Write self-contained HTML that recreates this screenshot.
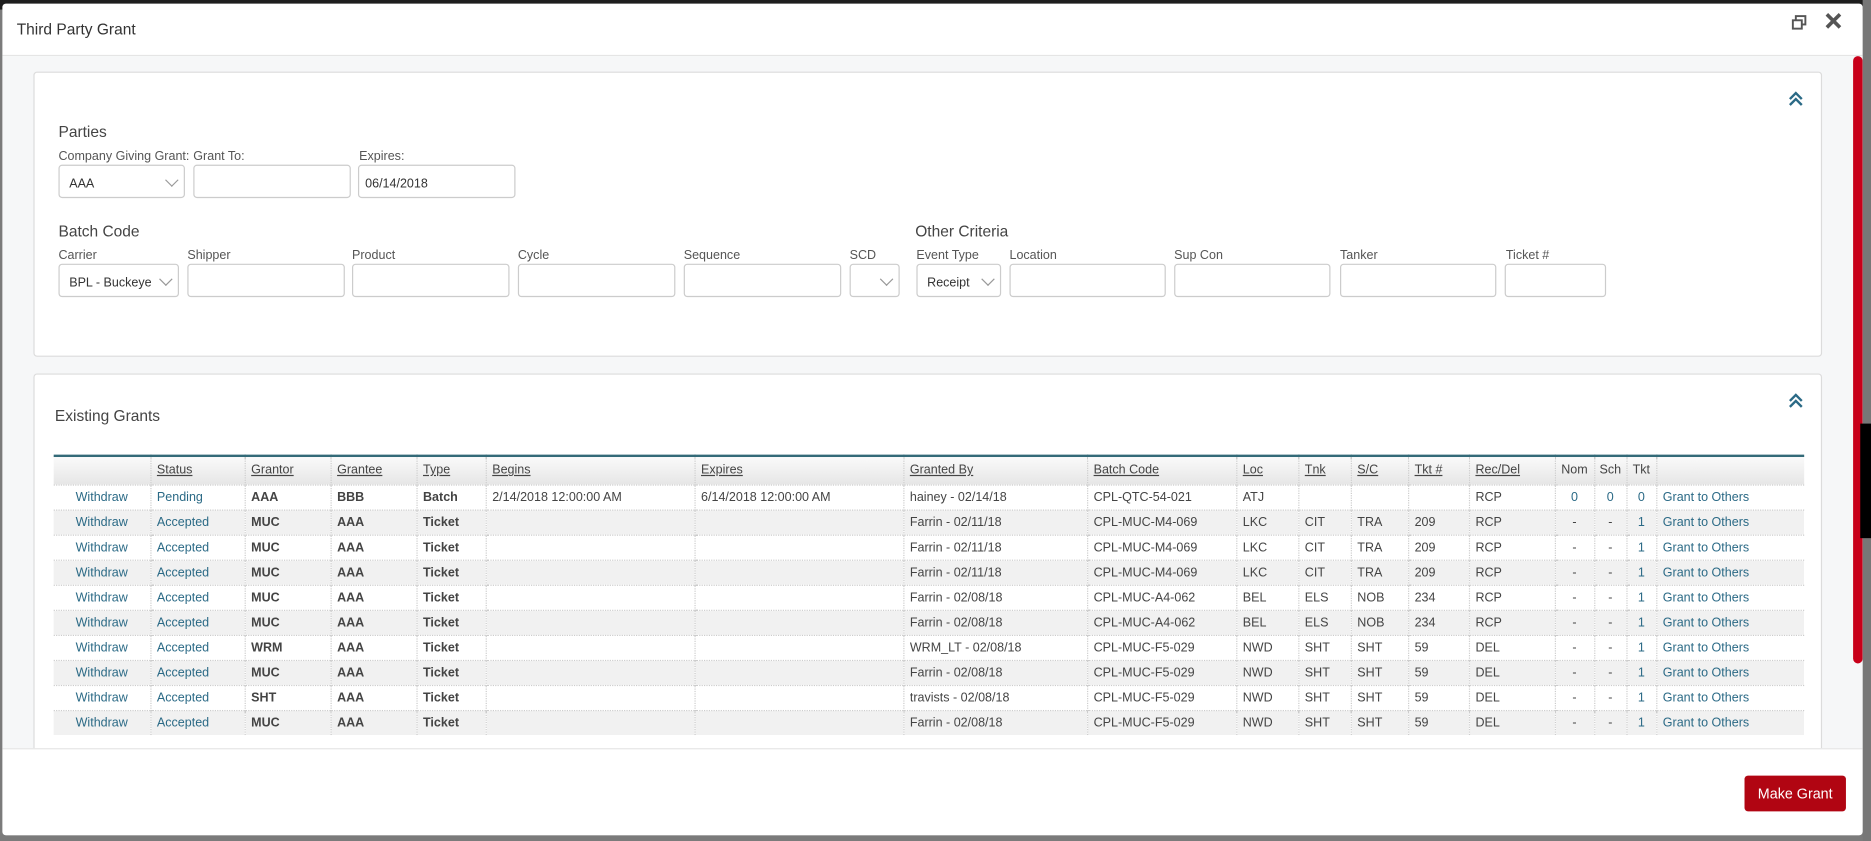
<!DOCTYPE html>
<html><head><meta charset="utf-8"><style>
*{box-sizing:border-box;margin:0;padding:0}
html,body{width:1871px;height:841px;overflow:hidden;background:#7b7b7b}
#s{position:absolute;left:0;top:0;width:1568px;height:705px;transform:scale(1.19324);transform-origin:0 0;font-family:"Liberation Sans",Arial,sans-serif;color:#333}
.abs{position:absolute}
#top{left:0;top:0;width:1568px;height:8px;background:#1e1e1e}
#rstrip{left:1561px;top:0;width:7px;height:705px;background:#777}
#rblk{left:1559px;top:355px;width:9px;height:96px;background:#000}
#modal{left:2px;top:3px;width:1559px;height:697px;background:#fff;border-radius:3px;overflow:hidden}
#hdr{left:0;top:0;width:1559px;height:44px;border-bottom:1px solid #e5e5e5}
#hdr .t{left:12px;top:14px;font-size:13px;color:#333}
#body{left:0;top:44px;width:1559px;height:580px;background:#f6f7f8}
.panel{position:absolute;background:#fff;border:1px solid #dcdcdc;border-radius:3px}
.h{position:absolute;font-size:13px;color:#444}
.lb{position:absolute;font-size:10.5px;color:#555}
.in{position:absolute;height:28px;border:1px solid #ccc;border-radius:3px;background:#fff;font-size:10.5px;color:#333;padding:9px 0 0 8px}
.sel::after{content:"";position:absolute;right:6px;top:8px;width:7px;height:7px;border-right:1px solid #999;border-bottom:1px solid #999;transform:rotate(45deg)}
.chev{position:absolute;width:14px;height:14px}
table{position:absolute;left:16px;top:67px;width:1467px;border-collapse:collapse;font-size:10.5px;table-layout:fixed;border-top:2px solid #336a78;border-radius:4px 4px 0 0}
th{height:24px;background:linear-gradient(#fafafa,#e6e6e6);text-align:left;font-weight:normal;color:#444;text-decoration:underline;padding-left:5px;border-left:1px dotted #ccc}
td{height:21px;padding-left:5px;border-left:1px dotted #ccc;border-top:1px dotted #ccc;color:#444;white-space:nowrap;overflow:hidden}
tr:nth-child(odd) td{background:#f1f1f1}
td.b{font-weight:bold;color:#444}
.a{color:#2b6a86}
.c{text-align:center;padding-left:0}
th.c{text-decoration:none}
#ftr{left:0;top:624px;width:1559px;height:73px;border-top:1px solid #e5e5e5;background:#fff}
#btn{left:1460px;top:22px;width:85px;height:30px;background:#b10512;border-radius:3px;color:#fff;font-size:12px;text-align:center;line-height:30px}
#sb{left:1551px;top:0px;width:8px;height:509px;background:#c8001a;border-radius:4px}
</style></head><body><div id="s">
<div class="abs" id="top"></div>
<div class="abs" id="rstrip"></div>
<div class="abs" id="modal">
 <div class="abs" id="hdr"><div class="abs t">Third Party Grant</div>
  <svg class="abs" style="left:1499px;top:9px" width="14" height="14" viewBox="0 0 14 14"><rect x="4" y="1.5" width="8" height="7" fill="none" stroke="#555" stroke-width="1.6"/><rect x="1.5" y="5" width="7.5" height="7" fill="#fff" stroke="#555" stroke-width="1.6"/></svg>
  <svg class="abs" style="left:1527px;top:7px" width="15" height="15" viewBox="0 0 15 15"><path d="M2 2L13 13M13 2L2 13" stroke="#555" stroke-width="3"/></svg>
 </div>
 <div class="abs" id="body">
  <div class="panel" style="left:26px;top:13px;width:1499px;height:239px">
   <svg class="chev" style="left:1469px;top:15px" viewBox="0 0 14 14"><path d="M2 7L7 2L12 7M2 12L7 7L12 12" fill="none" stroke="#2b6a86" stroke-width="2"/></svg>
   <div class="h" style="left:20px;top:42px">Parties</div>
   <div class="lb" style="left:20px;top:64px">Company Giving Grant:</div>
   <div class="lb" style="left:133px;top:64px">Grant To:</div>
   <div class="lb" style="left:272px;top:64px">Expires:</div>
   <div class="in sel" style="left:20px;top:77px;width:106px">AAA</div>
   <div class="in" style="left:133px;top:77px;width:132px"></div>
   <div class="in" style="left:271px;top:77px;width:132px;padding-left:5px">06/14/2018</div>
   <div class="h" style="left:20px;top:125px">Batch Code</div>
   <div class="h" style="left:738px;top:125px">Other Criteria</div>
   <div class="lb" style="left:20px;top:147px">Carrier</div>
   <div class="lb" style="left:128px;top:147px">Shipper</div>
   <div class="lb" style="left:266px;top:147px">Product</div>
   <div class="lb" style="left:405px;top:147px">Cycle</div>
   <div class="lb" style="left:544px;top:147px">Sequence</div>
   <div class="lb" style="left:683px;top:147px">SCD</div>
   <div class="lb" style="left:739px;top:147px">Event Type</div>
   <div class="lb" style="left:817px;top:147px">Location</div>
   <div class="lb" style="left:955px;top:147px">Sup Con</div>
   <div class="lb" style="left:1094px;top:147px">Tanker</div>
   <div class="lb" style="left:1233px;top:147px">Ticket #</div>
   <div class="in sel" style="left:20px;top:160px;width:101px">BPL - Buckeye</div>
   <div class="in" style="left:128px;top:160px;width:132px"></div>
   <div class="in" style="left:266px;top:160px;width:132px"></div>
   <div class="in" style="left:405px;top:160px;width:132px"></div>
   <div class="in" style="left:544px;top:160px;width:132px"></div>
   <div class="in sel" style="left:683px;top:160px;width:42px"></div>
   <div class="in sel" style="left:739px;top:160px;width:71px">Receipt</div>
   <div class="in" style="left:817px;top:160px;width:131px"></div>
   <div class="in" style="left:955px;top:160px;width:131px"></div>
   <div class="in" style="left:1094px;top:160px;width:131px"></div>
   <div class="in" style="left:1232px;top:160px;width:85px"></div>
  </div>
  <div class="panel" style="left:26px;top:266px;width:1499px;height:330px;overflow:hidden">
   <svg class="chev" style="left:1469px;top:15px" viewBox="0 0 14 14"><path d="M2 7L7 2L12 7M2 12L7 7L12 12" fill="none" stroke="#2b6a86" stroke-width="2"/></svg>
   <div class="h" style="left:17px;top:27px">Existing Grants</div>
   <table>
    <colgroup><col style="width:81px"><col style="width:79px"><col style="width:72px"><col style="width:72px"><col style="width:58px"><col style="width:175px"><col style="width:175px"><col style="width:154px"><col style="width:125px"><col style="width:52px"><col style="width:44px"><col style="width:48px"><col style="width:51px"><col style="width:72px"><col style="width:33px"><col style="width:27px"><col style="width:25px"><col style="width:124px"></colgroup>
    <tr><th style="border-left:none;text-decoration:none"></th><th>Status</th><th>Grantor</th><th>Grantee</th><th>Type</th><th>Begins</th><th>Expires</th><th>Granted By</th><th>Batch Code</th><th>Loc</th><th>Tnk</th><th>S/C</th><th>Tkt #</th><th>Rec/Del</th><th class="c">Nom</th><th class="c">Sch</th><th class="c">Tkt</th><th style="text-decoration:none"></th></tr>
    <tr><td class="a c" style="border-left:none">Withdraw</td><td class="a">Pending</td><td class="b">AAA</td><td class="b">BBB</td><td class="b">Batch</td><td>2/14/2018 12:00:00 AM</td><td>6/14/2018 12:00:00 AM</td><td>hainey - 02/14/18</td><td>CPL-QTC-54-021</td><td>ATJ</td><td></td><td></td><td></td><td>RCP</td><td class="a c">0</td><td class="a c">0</td><td class="a c">0</td><td class="a">Grant to Others</td></tr>
    <tr><td class="a c" style="border-left:none">Withdraw</td><td class="a">Accepted</td><td class="b">MUC</td><td class="b">AAA</td><td class="b">Ticket</td><td></td><td></td><td>Farrin - 02/11/18</td><td>CPL-MUC-M4-069</td><td>LKC</td><td>CIT</td><td>TRA</td><td>209</td><td>RCP</td><td class="c">-</td><td class="c">-</td><td class="a c">1</td><td class="a">Grant to Others</td></tr>
    <tr><td class="a c" style="border-left:none">Withdraw</td><td class="a">Accepted</td><td class="b">MUC</td><td class="b">AAA</td><td class="b">Ticket</td><td></td><td></td><td>Farrin - 02/11/18</td><td>CPL-MUC-M4-069</td><td>LKC</td><td>CIT</td><td>TRA</td><td>209</td><td>RCP</td><td class="c">-</td><td class="c">-</td><td class="a c">1</td><td class="a">Grant to Others</td></tr>
    <tr><td class="a c" style="border-left:none">Withdraw</td><td class="a">Accepted</td><td class="b">MUC</td><td class="b">AAA</td><td class="b">Ticket</td><td></td><td></td><td>Farrin - 02/11/18</td><td>CPL-MUC-M4-069</td><td>LKC</td><td>CIT</td><td>TRA</td><td>209</td><td>RCP</td><td class="c">-</td><td class="c">-</td><td class="a c">1</td><td class="a">Grant to Others</td></tr>
    <tr><td class="a c" style="border-left:none">Withdraw</td><td class="a">Accepted</td><td class="b">MUC</td><td class="b">AAA</td><td class="b">Ticket</td><td></td><td></td><td>Farrin - 02/08/18</td><td>CPL-MUC-A4-062</td><td>BEL</td><td>ELS</td><td>NOB</td><td>234</td><td>RCP</td><td class="c">-</td><td class="c">-</td><td class="a c">1</td><td class="a">Grant to Others</td></tr>
    <tr><td class="a c" style="border-left:none">Withdraw</td><td class="a">Accepted</td><td class="b">MUC</td><td class="b">AAA</td><td class="b">Ticket</td><td></td><td></td><td>Farrin - 02/08/18</td><td>CPL-MUC-A4-062</td><td>BEL</td><td>ELS</td><td>NOB</td><td>234</td><td>RCP</td><td class="c">-</td><td class="c">-</td><td class="a c">1</td><td class="a">Grant to Others</td></tr>
    <tr><td class="a c" style="border-left:none">Withdraw</td><td class="a">Accepted</td><td class="b">WRM</td><td class="b">AAA</td><td class="b">Ticket</td><td></td><td></td><td>WRM_LT - 02/08/18</td><td>CPL-MUC-F5-029</td><td>NWD</td><td>SHT</td><td>SHT</td><td>59</td><td>DEL</td><td class="c">-</td><td class="c">-</td><td class="a c">1</td><td class="a">Grant to Others</td></tr>
    <tr><td class="a c" style="border-left:none">Withdraw</td><td class="a">Accepted</td><td class="b">MUC</td><td class="b">AAA</td><td class="b">Ticket</td><td></td><td></td><td>Farrin - 02/08/18</td><td>CPL-MUC-F5-029</td><td>NWD</td><td>SHT</td><td>SHT</td><td>59</td><td>DEL</td><td class="c">-</td><td class="c">-</td><td class="a c">1</td><td class="a">Grant to Others</td></tr>
    <tr><td class="a c" style="border-left:none">Withdraw</td><td class="a">Accepted</td><td class="b">SHT</td><td class="b">AAA</td><td class="b">Ticket</td><td></td><td></td><td>travists - 02/08/18</td><td>CPL-MUC-F5-029</td><td>NWD</td><td>SHT</td><td>SHT</td><td>59</td><td>DEL</td><td class="c">-</td><td class="c">-</td><td class="a c">1</td><td class="a">Grant to Others</td></tr>
    <tr><td class="a c" style="border-left:none">Withdraw</td><td class="a">Accepted</td><td class="b">MUC</td><td class="b">AAA</td><td class="b">Ticket</td><td></td><td></td><td>Farrin - 02/08/18</td><td>CPL-MUC-F5-029</td><td>NWD</td><td>SHT</td><td>SHT</td><td>59</td><td>DEL</td><td class="c">-</td><td class="c">-</td><td class="a c">1</td><td class="a">Grant to Others</td></tr>
   </table>
  </div>
  <div class="abs" id="sb"></div>
 </div>
 <div class="abs" id="ftr"><div class="abs" id="btn">Make Grant</div></div>
</div>
<div class="abs" id="rblk"></div>
</div></body></html>
